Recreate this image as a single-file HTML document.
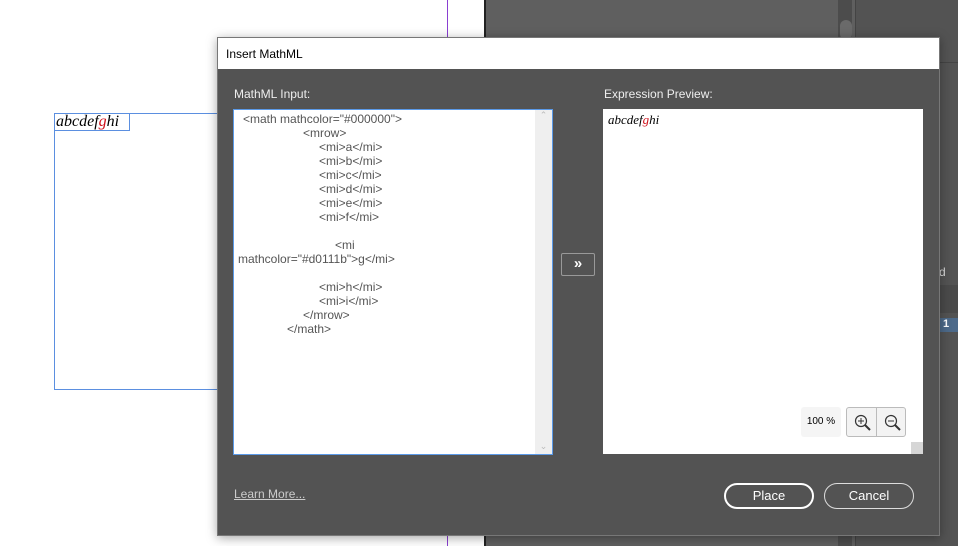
<!DOCTYPE html><html><head><style>
*{margin:0;padding:0;box-sizing:border-box}
body{width:958px;height:546px;overflow:hidden;position:relative;background:#fff;font-family:"Liberation Sans",sans-serif}
.a{position:absolute}
.code div{position:absolute;font-size:12px;color:#555;white-space:nowrap;line-height:14px}
.m{font-family:"Liberation Serif",serif;font-style:italic}
</style></head><body>
<div class="a" style="left:447px;top:0;width:1px;height:546px;background:#8a3fd1"></div>
<div class="a" style="left:484px;top:0;width:474px;height:546px;background:#5f5f5f;border-left:2px solid #222"></div>
<div class="a" style="left:838px;top:0;width:14px;height:546px;background:#4c4c4c"></div>
<div class="a" style="left:840px;top:20px;width:12px;height:20px;border-radius:6px;background:#6a6a6a"></div>
<div class="a" style="left:855px;top:0;width:103px;height:546px;background:#535353;border-left:1px solid #444"></div>
<div class="a" style="left:855px;top:62px;width:103px;height:1px;background:#444"></div>
<div class="a" style="left:855px;top:285px;width:103px;height:28px;background:#4a4a4a"></div>
<div class="a" style="left:938px;top:318px;width:20px;height:14px;background:#4d6a8a;color:#fff;font-size:11px;font-weight:bold;padding-left:5px">1</div>
<div class="a" style="left:939px;top:265px;color:#ddd;font-size:12px">d</div>
<div class="a" style="left:54px;top:113px;width:164px;height:277px;border:1px solid #5b8fe0"></div>
<div class="a" style="left:54px;top:113px;width:76px;height:18px;border:1px solid #5b8fe0"></div>
<div class="a m" style="left:56px;top:113px;font-size:16px;color:#000">abcde<span>f</span><span style="color:#d0111b">g</span>hi</div>
<div class="a" style="left:217px;top:37px;width:723px;height:499px;background:#535353;border:1px solid #777;box-shadow:0 2px 10px rgba(0,0,0,.35)">
<div style="height:31px;background:#fff;font-size:12px;color:#000;padding:9px 0 0 8px">Insert MathML</div>
</div>
<div class="a" style="left:234px;top:87px;color:#eee;font-size:12px">MathML Input:</div>
<div class="a" style="left:604px;top:87px;color:#eee;font-size:12px">Expression Preview:</div>
<div class="a" style="left:233px;top:109px;width:320px;height:346px;background:#fff;border:1px solid #5b9ae8">
<div class="a" style="right:0;top:0;width:17px;height:344px;background:#efefef;color:#bbb;font-size:9px;text-align:center">⌃<div style="position:absolute;bottom:2px;width:17px">⌄</div></div>
<div class="code">
<div style="left:9px;top:2px">&lt;math mathcolor="#000000"&gt;</div>
<div style="left:69px;top:16px">&lt;mrow&gt;</div>
<div style="left:85px;top:30px">&lt;mi&gt;a&lt;/mi&gt;</div>
<div style="left:85px;top:44px">&lt;mi&gt;b&lt;/mi&gt;</div>
<div style="left:85px;top:58px">&lt;mi&gt;c&lt;/mi&gt;</div>
<div style="left:85px;top:72px">&lt;mi&gt;d&lt;/mi&gt;</div>
<div style="left:85px;top:86px">&lt;mi&gt;e&lt;/mi&gt;</div>
<div style="left:85px;top:100px">&lt;mi&gt;f&lt;/mi&gt;</div>
<div style="left:101px;top:128px">&lt;mi</div>
<div style="left:4px;top:142px">mathcolor="#d0111b"&gt;g&lt;/mi&gt;</div>
<div style="left:85px;top:170px">&lt;mi&gt;h&lt;/mi&gt;</div>
<div style="left:85px;top:184px">&lt;mi&gt;i&lt;/mi&gt;</div>
<div style="left:69px;top:198px">&lt;/mrow&gt;</div>
<div style="left:53px;top:212px">&lt;/math&gt;</div>
</div>
</div>
<div class="a" style="left:561px;top:253px;width:34px;height:23px;border:1px solid #999;border-radius:2px;color:#fff;font-size:15px;font-weight:bold;text-align:center;line-height:20px">»</div>
<div class="a" style="left:603px;top:109px;width:320px;height:345px;background:#fff">
<div class="a m" style="left:5px;top:3px;font-size:13px;color:#000">abcdef<span style="color:#d0111b">g</span>hi</div>
<div class="a" style="left:198px;top:298px;width:40px;height:30px;background:#f5f5f5;border-radius:3px;font-size:10px;color:#000;text-align:center;line-height:30px">100 %</div>
<div class="a" style="left:243px;top:298px;width:60px;height:30px;background:#f3f3f3;border:1px solid #bbb;border-radius:3px">
<div class="a" style="left:29px;top:0;width:1px;height:28px;background:#bbb"></div>
<svg class="a" style="left:6px;top:5px" width="20" height="20"><circle cx="8" cy="8" r="5.5" fill="none" stroke="#333" stroke-width="1.2"/><path d="M5 8h6M8 5v6" stroke="#333"/><path d="M12 12l5 5" stroke="#333" stroke-width="2"/></svg>
<svg class="a" style="left:36px;top:5px" width="20" height="20"><circle cx="8" cy="8" r="5.5" fill="none" stroke="#333" stroke-width="1.2"/><path d="M5 8h6" stroke="#333"/><path d="M12 12l5 5" stroke="#333" stroke-width="2"/></svg>
</div>
<div class="a" style="left:308px;top:333px;width:12px;height:12px;background:#d6d6d6"></div>
</div>
<div class="a" style="left:234px;top:487px;color:#ccc;font-size:12px;text-decoration:underline">Learn More...</div>
<div class="a" style="left:724px;top:483px;width:90px;height:26px;border:2px solid #fff;border-radius:13px;color:#fff;font-size:13px;text-align:center;line-height:22px">Place</div>
<div class="a" style="left:824px;top:483px;width:90px;height:26px;border:1px solid #ddd;border-radius:13px;color:#fff;font-size:13px;text-align:center;line-height:24px">Cancel</div>
</body></html>
